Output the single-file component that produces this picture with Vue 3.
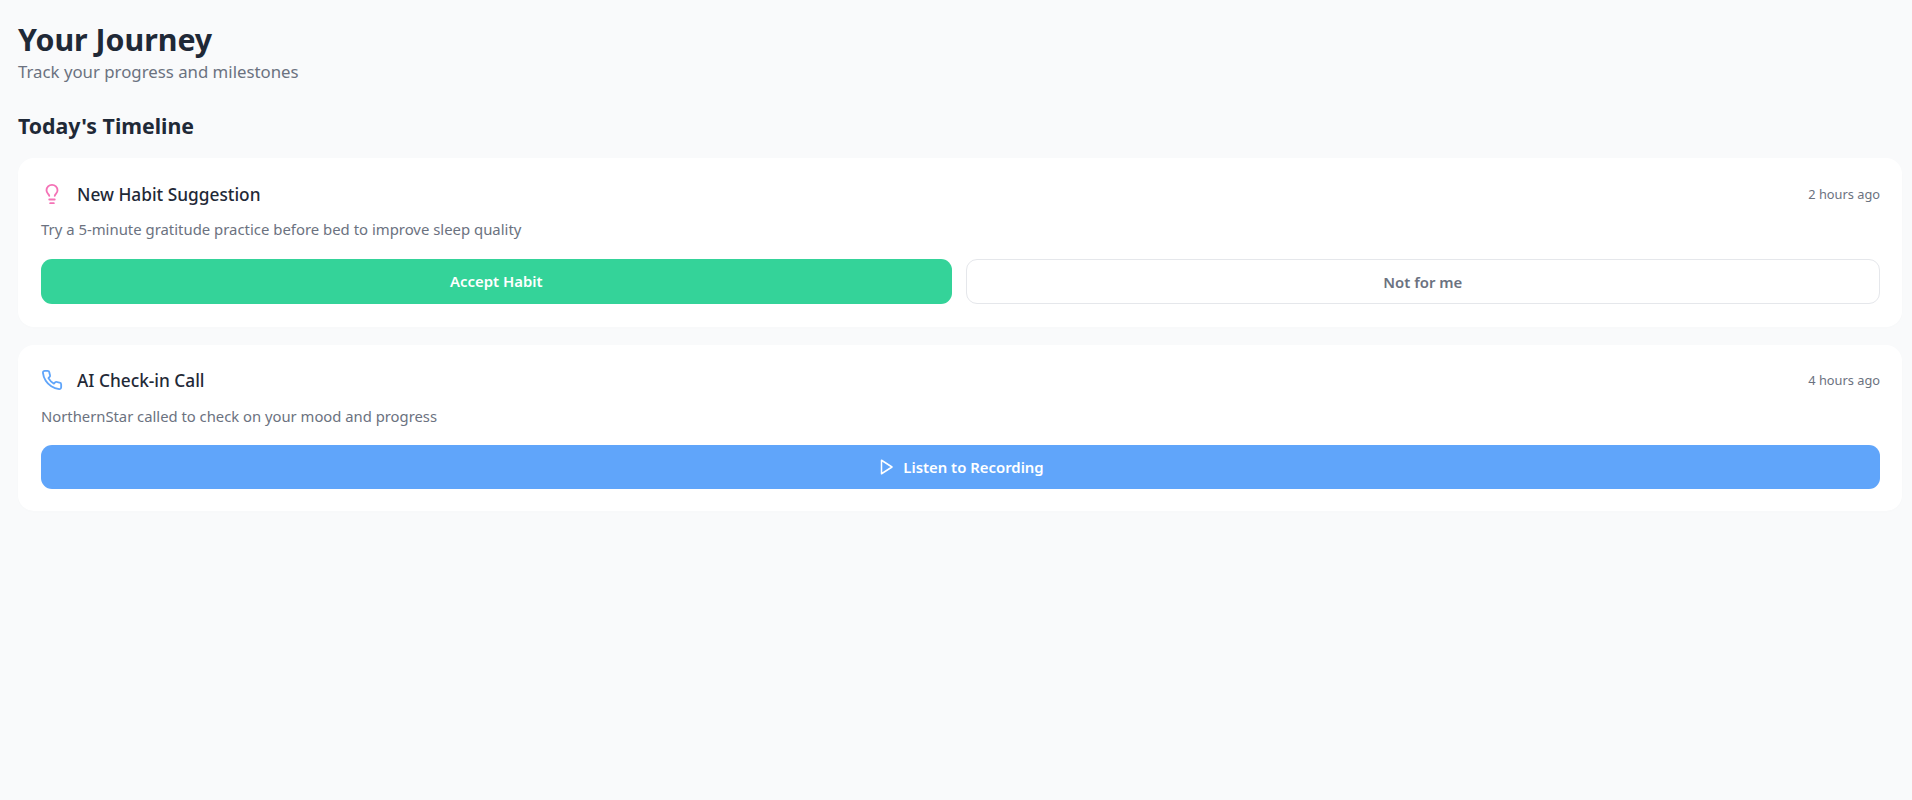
<template>
  <div class="journey">
    <header class="head">
      <h1>Your Journey</h1>
      <p>Track your progress and milestones</p>
    </header>

    <h2>Today's Timeline</h2>

    <div class="timeline">
      <section class="card">
        <div class="card-top">
          <svg class="icon pink" viewBox="0 0 24 24">
            <path d="M15 14c.2-1 .7-1.7 1.5-2.5 1-.9 1.5-2.2 1.5-3.5A6 6 0 0 0 6 8c0 1 .2 2.2 1.5 3.5.7.7 1.3 1.5 1.5 2.5" />
            <path d="M9 18h6" />
            <path d="M10 22h4" />
          </svg>
          <h3>New Habit Suggestion</h3>
          <span class="time">2 hours ago</span>
        </div>
        <p class="desc">Try a 5-minute gratitude practice before bed to improve sleep quality</p>
        <div class="actions">
          <button class="btn green">Accept Habit</button>
          <button class="btn outline">Not for me</button>
        </div>
      </section>

      <section class="card call">
        <div class="card-top">
          <svg class="icon blue" viewBox="0 0 24 24">
            <path d="M22 16.92v3a2 2 0 0 1-2.18 2 19.79 19.79 0 0 1-8.63-3.07 19.5 19.5 0 0 1-6-6 19.79 19.79 0 0 1-3.07-8.67A2 2 0 0 1 4.11 2h3a2 2 0 0 1 2 1.72 12.84 12.84 0 0 0 .7 2.81 2 2 0 0 1-.45 2.11L8.09 9.91a16 16 0 0 0 6 6l1.27-1.27a2 2 0 0 1 2.11-.45 12.84 12.84 0 0 0 2.81.7A2 2 0 0 1 22 16.92z" />
          </svg>
          <h3>AI Check-in Call</h3>
          <span class="time">4 hours ago</span>
        </div>
        <p class="desc">NorthernStar called to check on your mood and progress</p>
        <div class="actions">
          <button class="btn blue-btn">
            <svg class="play" viewBox="0 0 24 24"><polygon points="6 3 20 12 6 21 6 3" /></svg>
            Listen to Recording
          </button>
        </div>
      </section>
    </div>
  </div>
</template>

<script setup>
</script>

<style>
html, body {
  background: #f9fafb;
}
</style>

<style scoped>
.journey {
  min-height: 800px;
  box-sizing: border-box;
  padding: 20px 10px 0 18px;
  background: #f9fafb;
  font-family: "Noto Sans", "Open Sans", sans-serif;
  color: #1f2937;
}
.head h1 {
  margin: 0;
  font-size: 30.3px;
  line-height: 40px;
  font-weight: 700;
}
.head p {
  margin: 0;
  font-size: 16.8px;
  line-height: 23px;
  color: #6b7280;
}
h2 {
  margin: 28px 0 18px;
  font-size: 21.3px;
  line-height: 29px;
  font-weight: 700;
}
.timeline {
  display: flex;
  flex-direction: column;
  gap: 18px;
}
.card {
  background: #fff;
  border-radius: 16px;
  padding: 24px 22px 23px 23px;
  box-shadow: 0 1px 3px rgba(0, 0, 0, 0.01);
}
.card.call {
  padding-top: 23px;
  padding-bottom: 22px;
}
.card-top {
  display: flex;
  align-items: center;
  height: 24px;
}
.icon {
  width: 22px;
  height: 22px;
  margin-right: 14px;
  fill: none;
  stroke-width: 2;
  stroke-linecap: round;
  stroke-linejoin: round;
}
.pink { stroke: #f472b6; }
.blue { stroke: #60a5fa; }
h3 {
  margin: 0;
  font-size: 17.3px;
  font-weight: 500;
}
.time {
  margin-left: auto;
  font-size: 12.8px;
  color: #6b7280;
}
.desc {
  margin: 13px 0 19px;
  font-size: 14.9px;
  line-height: 21px;
  color: #6b7280;
}
.call .desc {
  margin: 14px 0 18px;
  font-size: 14.8px;
}
.actions {
  display: flex;
  gap: 14px;
}
.btn {
  flex: 1;
  box-sizing: content-box;
  height: 45px;
  padding: 0;
  border: none;
  border-radius: 11px;
  font-family: inherit;
  font-size: 14.9px;
  font-weight: 600;
  display: flex;
  align-items: center;
  justify-content: center;
  gap: 8px;
}
.green { height: 44px; padding-bottom: 1px; background: #34d399; color: #fff; }
.blue-btn { height: 44px; background: #60a5fa; color: #fff; }
.outline {
  height: 43px;
  padding: 0 1px;
  background: #fff;
  color: #6b7280;
  border: 1px solid #e5e7eb;
}
.play {
  width: 18px;
  height: 18px;
  fill: none;
  stroke: #fff;
  stroke-width: 2;
  stroke-linejoin: round;
}
</style>
